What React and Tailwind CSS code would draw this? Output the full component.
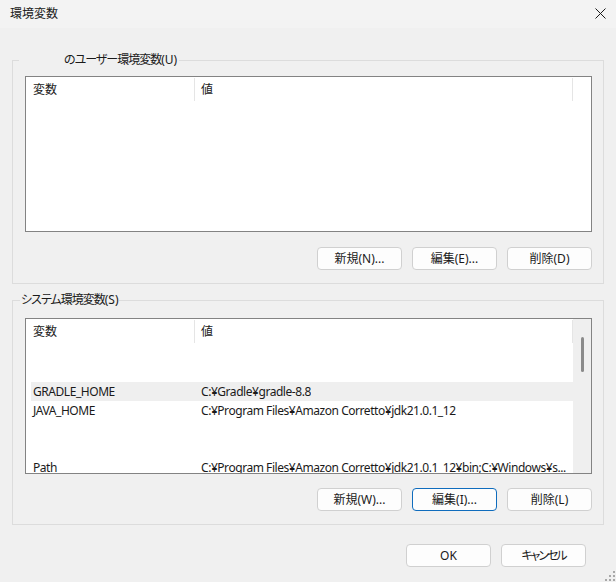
import React from "react";

function Btn({ children, focus, tight }) {
  return (
    <div
      className={
        "h-[23px] w-[85px] rounded-[4px] border bg-[#fdfdfd] flex items-center justify-center text-[12px] leading-none " +
        (focus ? "border-[#0f6cbd] " : "border-[#d0d0d0] ") +
        (tight ? "tracking-[-2px]" : "")
      }
    >
      {children}
    </div>
  );
}

function Header() {
  return (
    <div className="h-[25px] flex items-center shrink-0">
      <div className="w-[168px] pl-[7px] h-full flex items-center">変数</div>
      <div className="w-px h-[23px] bg-[#e5e5e5]" />
      <div className="w-[377px] pl-[6px] h-full flex items-center">値</div>
      <div className="w-px h-[23px] bg-[#e5e5e5]" />
    </div>
  );
}

function Row({ name, value, hl }) {
  return (
    <div
      className={
        "h-[19px] ml-[5px] w-[542px] flex items-center shrink-0 whitespace-nowrap tracking-[-0.45px] " +
        (hl ? "bg-[#efefef]" : "")
      }
    >
      <div className="w-[170px] pl-[2px] shrink-0">{name}</div>
      <div className="overflow-hidden">{value}</div>
    </div>
  );
}

export default function App() {
  return (
    <div className="w-[616px] h-[582px] bg-[#f0f0f0] relative overflow-hidden font-['Noto_Sans','Noto_Sans_CJK_JP',sans-serif] [font-feature-settings:'palt'] text-[12px] leading-[16px] text-[#1a1a1a]">
      {/* Title bar */}
      <div className="h-[28px] bg-[#f3f3f3] flex items-center justify-between pl-[10px] pr-[10px]">
        <span>環境変数</span>
        <svg width="11" height="11" viewBox="0 0 11 11" className="mt-[-1px]">
          <path d="M0.5 0.5 L10.5 10.5 M10.5 0.5 L0.5 10.5" stroke="#1a1a1a" strokeWidth="1" fill="none" />
        </svg>
      </div>

      <div className="px-[12px] pt-[24px]">
        {/* User variables */}
        <fieldset className="border border-[#dcdcdc]">
          <legend className="ml-[6px] px-[2px] h-[16px] leading-[16px]">
            <span className="inline-block w-[43px]" />
            <span className="tracking-[-1px]">のユーザー環境変数</span>(U)
          </legend>
          <div className="pl-[12px] pr-[11px] pt-[8px] pb-[13px]">
            <div className="h-[156px] border border-[#838383] bg-white overflow-hidden flex">
              <div className="w-[547px] flex flex-col">
                <Header />
              </div>
            </div>
            <div className="mt-[15px] flex justify-end gap-[10px]">
              <Btn>新規(N)...</Btn>
              <Btn>編集(E)...</Btn>
              <Btn>削除(D)</Btn>
            </div>
          </div>
        </fieldset>

        {/* System variables */}
        <fieldset className="border border-[#dcdcdc] mt-[8px]">
          <legend className="ml-[7px] px-[1px] h-[16px] leading-[16px]">
            <span className="tracking-[-1px]">システム環境変数</span>(S)
          </legend>
          <div className="pl-[12px] pr-[11px] pt-[10px] pb-[13px]">
            <div className="h-[156px] border border-[#838383] bg-white overflow-hidden flex">
              <div className="w-[547px] flex flex-col overflow-hidden">
                <Header />
                <Row name="" value="" />
                <Row name="" value="" />
                <Row name="GRADLE_HOME" value="C:¥Gradle¥gradle-8.8" hl />
                <Row name="JAVA_HOME" value="C:¥Program Files¥Amazon Corretto¥jdk21.0.1_12" />
                <Row name="" value="" />
                <Row name="" value="" />
                <Row
                  name="Path"
                  value="C:¥Program Files¥Amazon Corretto¥jdk21.0.1_12¥bin;C:¥Windows¥s..."
                />
              </div>
              <div className="w-[18px] bg-[#efefef] flex justify-center pt-[18px]">
                <div className="w-[3px] h-[35px] rounded-full bg-[#8a8a8a]" />
              </div>
            </div>
            <div className="mt-[14px] flex justify-end gap-[10px]">
              <Btn>新規(W)...</Btn>
              <Btn focus>編集(I)...</Btn>
              <Btn>削除(L)</Btn>
            </div>
          </div>
        </fieldset>

        <div className="mt-[19px] flex justify-end gap-[10px] pr-[18px]">
          <Btn>OK</Btn>
          <Btn tight>キャンセル</Btn>
        </div>
      </div>

      <svg width="11" height="11" viewBox="0 0 11 11" className="absolute right-0 bottom-0">
        <g fill="#a8a8a8">
          <rect x="8" y="0" width="2" height="2" />
          <rect x="4" y="4" width="2" height="2" />
          <rect x="8" y="4" width="2" height="2" />
          <rect x="0" y="8" width="2" height="2" />
          <rect x="4" y="8" width="2" height="2" />
          <rect x="8" y="8" width="2" height="2" />
        </g>
      </svg>
    </div>
  );
}
